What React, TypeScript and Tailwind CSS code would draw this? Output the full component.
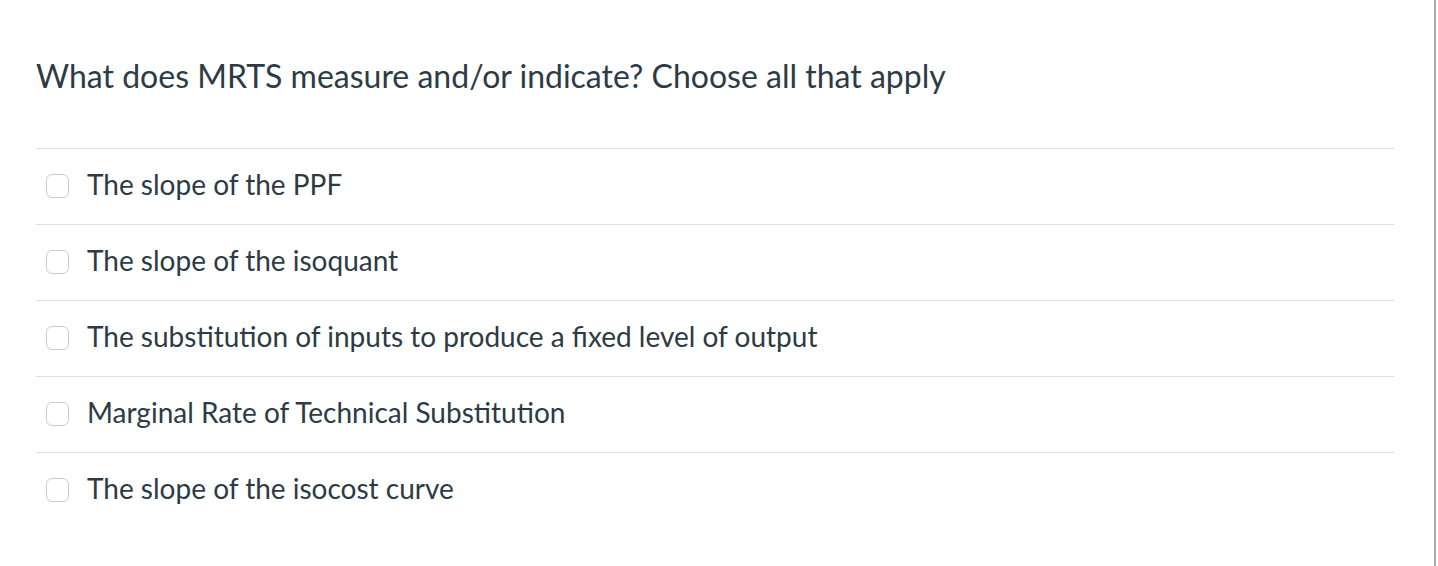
import React from 'react';

const options = [
  'The slope of the PPF',
  'The slope of the isoquant',
  'The substitution of inputs to produce a fixed level of output',
  'Marginal Rate of Technical Substitution',
  'The slope of the isocost curve',
];

function App() {
  return (
    <div className="flex h-[566px] w-[1438px] bg-white font-['Lato',sans-serif] text-[#2d3b45]">
      <div className="flex-1 pl-[36px] pr-[40px]">
        <h1 className="pt-[56px] text-[32px] leading-[40px] font-normal">
          What does MRTS measure and/or indicate? Choose all that apply
        </h1>
        <div className="mt-[52px]">
          {options.map((text) => (
            <label
              key={text}
              className="flex h-[76px] items-center border-t border-[#dcdfe1] pb-[4px] pl-[10px]"
            >
              <span className="mt-[2px] h-[24px] w-[23px] shrink-0 rounded-[6px] border border-[#c7cdd1] bg-white" />
              <span className="ml-[18px] mb-[2px] text-[28px] leading-[32px]">{text}</span>
            </label>
          ))}
        </div>
      </div>
      <div className="h-full w-[2px] bg-[#a9a9a9]" />
      <div className="w-[2px]" />
    </div>
  );
}

export default App;
